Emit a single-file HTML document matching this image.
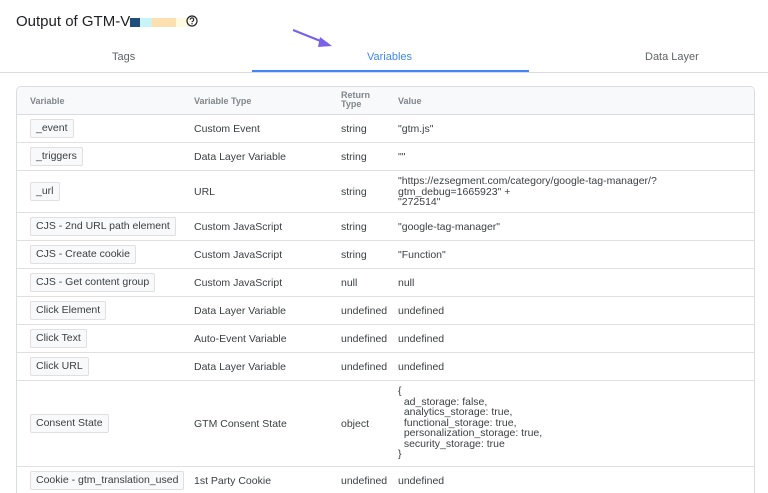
<!DOCTYPE html>
<html><head><meta charset="utf-8"><style>
*{margin:0;padding:0;box-sizing:border-box}
html,body{width:768px;height:493px;overflow:hidden}
body{background:#fff;font-family:"Liberation Sans",Arial,sans-serif;color:#202124;position:relative}
.title{position:absolute;left:16px;top:13px;font-size:15px;color:#202124}
.tabs{position:absolute;left:0;top:44px;width:768px;height:29px;border-bottom:1px solid #dadce0}
.tab{position:absolute;top:7px;font-size:11px;color:#5f6368}
.ul{position:absolute;left:252px;top:70px;width:277px;height:2px;background:#4285f4}
.tbl{position:absolute;left:16px;top:86px;width:739px;height:420px;border:1px solid #dadce0;border-radius:5px;overflow:hidden}
.hdr{position:absolute;left:0;top:0;width:100%;height:28px;background:#f8f9fa;border-bottom:1px solid #dadce0}
.h{position:absolute;font-size:9px;font-weight:bold;color:#80868b;line-height:9px}
.row{position:absolute;left:0;width:100%;border-bottom:1px solid #e0e0e0}
.c{position:absolute;font-size:10.5px;color:#3c4043;line-height:11px}
.chip{position:absolute;left:13px;height:19px;padding:0 5px;border:1px solid #e0e0e0;background:#f8f9fa;border-radius:2px;font-size:10.5px;line-height:17px;color:#3c4043}
</style></head><body>
<div class="title">Output of GTM-V<span style="display:inline-block;width:10px;height:9px;background:#1e4e79;vertical-align:-1px"></span><span style="display:inline-block;width:12px;height:9px;background:#c9f4f7;vertical-align:-1px"></span><span style="display:inline-block;width:24px;height:9px;background:#fde0b0;vertical-align:-1px"></span><span style="display:inline-block;width:14px;height:9px;background:#fffbe0;vertical-align:-1px"></span></div>
<svg style="position:absolute;left:186px;top:15px" width="12" height="12" viewBox="0 0 12 12"><circle cx="6" cy="6" r="5" fill="none" stroke="#202124" stroke-width="1.2"/><path d="M4.3 4.7a1.7 1.7 0 1 1 2.4 1.5c-.5.3-.7.6-.7 1.1" fill="none" stroke="#202124" stroke-width="1.1"/><circle cx="6" cy="8.8" r=".7" fill="#202124"/></svg>
<svg style="position:absolute;left:290px;top:27px" width="45" height="22"><path d="M3 3 L38 17" stroke="#7b61e8" stroke-width="2.2"/><path d="M30 10 L42 19 L28 20Z" fill="#7b61e8"/></svg>
<div class="tabs">
<div class="tab" style="left:112px">Tags</div>
<div class="tab" style="left:367px;color:#4285f4">Variables</div>
<div class="tab" style="left:645px">Data Layer</div>
</div>
<div class="ul"></div>
<div class="tbl">
<div class="hdr">
<div class="h" style="left:13px;top:10px">Variable</div>
<div class="h" style="left:177px;top:10px">Variable Type</div>
<div class="h" style="left:324px;top:4px">Return<br>Type</div>
<div class="h" style="left:381px;top:10px">Value</div>
</div>

<div class="row" style="top:28px;height:28px"><div class="chip" style="top:4px">_event</div><div class="c" style="left:177px;top:9px">Custom Event</div><div class="c" style="left:324px;top:9px">string</div><div class="c" style="left:381px;top:9px">"gtm.js"</div></div>
<div class="row" style="top:56px;height:28px"><div class="chip" style="top:4px">_triggers</div><div class="c" style="left:177px;top:9px">Data Layer Variable</div><div class="c" style="left:324px;top:9px">string</div><div class="c" style="left:381px;top:9px">""</div></div>
<div class="row" style="top:84px;height:42px"><div class="chip" style="top:11px">_url</div><div class="c" style="left:177px;top:16px">URL</div><div class="c" style="left:324px;top:16px">string</div><div class="c" style="left:381px;top:5px;line-height:10.5px">"https://ezsegment.com/category/google-tag-manager/?<br>gtm_debug=1665923" +<br>"272514"</div></div>
<div class="row" style="top:126px;height:28px"><div class="chip" style="top:4px">CJS - 2nd URL path element</div><div class="c" style="left:177px;top:9px">Custom JavaScript</div><div class="c" style="left:324px;top:9px">string</div><div class="c" style="left:381px;top:9px">"google-tag-manager"</div></div>
<div class="row" style="top:154px;height:28px"><div class="chip" style="top:4px">CJS - Create cookie</div><div class="c" style="left:177px;top:9px">Custom JavaScript</div><div class="c" style="left:324px;top:9px">string</div><div class="c" style="left:381px;top:9px">"Function"</div></div>
<div class="row" style="top:182px;height:28px"><div class="chip" style="top:4px">CJS - Get content group</div><div class="c" style="left:177px;top:9px">Custom JavaScript</div><div class="c" style="left:324px;top:9px">null</div><div class="c" style="left:381px;top:9px">null</div></div>
<div class="row" style="top:210px;height:28px"><div class="chip" style="top:4px">Click Element</div><div class="c" style="left:177px;top:9px">Data Layer Variable</div><div class="c" style="left:324px;top:9px">undefined</div><div class="c" style="left:381px;top:9px">undefined</div></div>
<div class="row" style="top:238px;height:28px"><div class="chip" style="top:4px">Click Text</div><div class="c" style="left:177px;top:9px">Auto-Event Variable</div><div class="c" style="left:324px;top:9px">undefined</div><div class="c" style="left:381px;top:9px">undefined</div></div>
<div class="row" style="top:266px;height:28px"><div class="chip" style="top:4px">Click URL</div><div class="c" style="left:177px;top:9px">Data Layer Variable</div><div class="c" style="left:324px;top:9px">undefined</div><div class="c" style="left:381px;top:9px">undefined</div></div>
<div class="row" style="top:294px;height:86px"><div class="chip" style="top:33px">Consent State</div><div class="c" style="left:177px;top:38px">GTM Consent State</div><div class="c" style="left:324px;top:38px">object</div><div class="c" style="left:381px;top:5px;line-height:10.5px">{<br>&nbsp;&nbsp;ad_storage: false,<br>&nbsp;&nbsp;analytics_storage: true,<br>&nbsp;&nbsp;functional_storage: true,<br>&nbsp;&nbsp;personalization_storage: true,<br>&nbsp;&nbsp;security_storage: true<br>}</div></div>
<div class="row" style="top:380px;height:28px;border:none"><div class="chip" style="top:4px">Cookie - gtm_translation_used</div><div class="c" style="left:177px;top:9px">1st Party Cookie</div><div class="c" style="left:324px;top:9px">undefined</div><div class="c" style="left:381px;top:9px">undefined</div></div>
</div>
</body></html>
